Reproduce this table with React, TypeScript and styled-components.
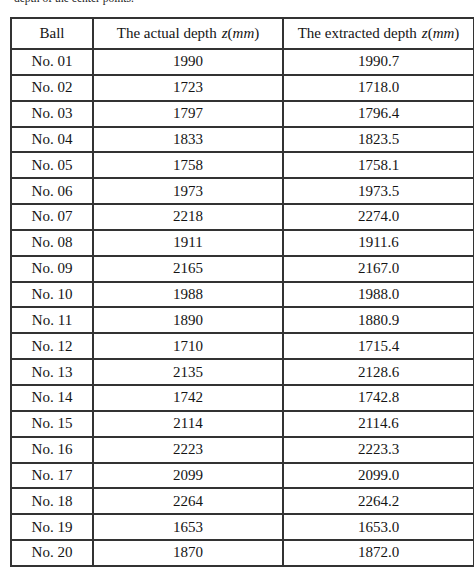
import styled, { createGlobalStyle } from "styled-components"

const GlobalStyle = createGlobalStyle`
  html, body {
    margin: 0;
    padding: 0;
    background: #ffffff;
  }
  body {
    font-family: "Liberation Serif", "Times New Roman", serif;
    color: #1f1f1f;
    overflow: hidden;
  }
`

const Page = styled.div`
  width: 474px;
  height: 581px;
  overflow: hidden;
  box-sizing: border-box;
  padding-left: 10px;
`

const Caption = styled.p`
  margin: -8px 0 0 4px;
  font-size: 11.5px;
  line-height: 13px;
  color: #222;
`

const Table = styled.table`
  margin-top: 12px;
  width: 463px;
  border-collapse: collapse;
  table-layout: fixed;
  font-size: 15px;
  color: #141414;
`

const Th = styled.th<{ w: number }>`
  width: ${({ w }) => w}px;
  height: 29px;
  padding: 0;
  font-weight: normal;
  text-align: center;
  border: 2px solid #333;
  border-bottom-width: 2.5px;
`

const Td = styled.td`
  height: 23.85px;
  padding: 0;
  text-align: center;
  border: 2px solid #333;
`

const Var = styled.i`
  font-style: italic;
  margin-left: 5px;
`

const Heading = styled.h3`
  margin: 12px 0 0 -22px;
  font-size: 16px;
  font-weight: bold;
  color: #222;
`

const rows: [string, string, string][] = [
  ["No. 01", "1990", "1990.7"],
  ["No. 02", "1723", "1718.0"],
  ["No. 03", "1797", "1796.4"],
  ["No. 04", "1833", "1823.5"],
  ["No. 05", "1758", "1758.1"],
  ["No. 06", "1973", "1973.5"],
  ["No. 07", "2218", "2274.0"],
  ["No. 08", "1911", "1911.6"],
  ["No. 09", "2165", "2167.0"],
  ["No. 10", "1988", "1988.0"],
  ["No. 11", "1890", "1880.9"],
  ["No. 12", "1710", "1715.4"],
  ["No. 13", "2135", "2128.6"],
  ["No. 14", "1742", "1742.8"],
  ["No. 15", "2114", "2114.6"],
  ["No. 16", "2223", "2223.3"],
  ["No. 17", "2099", "2099.0"],
  ["No. 18", "2264", "2264.2"],
  ["No. 19", "1653", "1653.0"],
  ["No. 20", "1870", "1872.0"],
]

const App = () => {
  return (
    <>
      <GlobalStyle />
      <Page>
        <Caption>depth of the center points.</Caption>
        <Table>
          <thead>
            <tr>
              <Th w={80}>Ball</Th>
              <Th w={188}>
                The actual depth<Var>z</Var>(<i>mm</i>)
              </Th>
              <Th w={189}>
                The extracted depth<Var>z</Var>(<i>mm</i>)
              </Th>
            </tr>
          </thead>
          <tbody>
            {rows.map(([ball, actual, extracted]) => (
              <tr key={ball}>
                <Td>{ball}</Td>
                <Td>{actual}</Td>
                <Td>{extracted}</Td>
              </tr>
            ))}
          </tbody>
        </Table>
        <Heading>Conclusion</Heading>
      </Page>
    </>
  )
}

export default App
